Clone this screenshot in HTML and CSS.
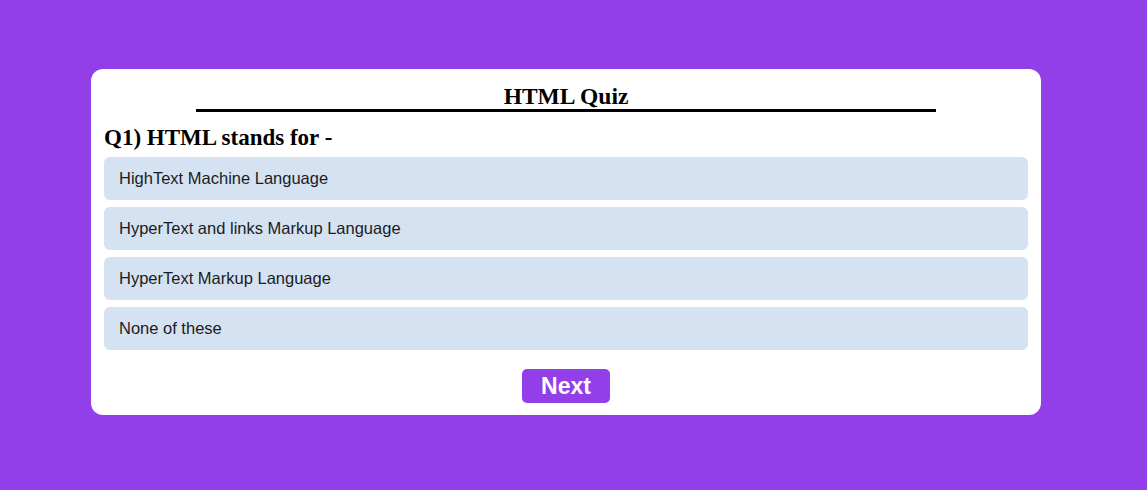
FILE: index.html
```html
<!DOCTYPE html>
<html>
<head>
<meta charset="utf-8">
<title>HTML Quiz</title>
<link rel="stylesheet" href="styles.css">
</head>
<body>
<main class="quiz">
  <h1 class="quiz-title">HTML Quiz</h1>
  <h2 class="question">Q1) HTML stands for -</h2>
  <ul class="options">
    <li class="option">HighText Machine Language</li>
    <li class="option">HyperText and links Markup Language</li>
    <li class="option">HyperText Markup Language</li>
    <li class="option">None of these</li>
  </ul>
  <div class="actions">
    <button class="next-btn">Next</button>
  </div>
</main>
</body>
</html>
```
FILE: styles.css
```css
html, body {
  margin: 0;
  padding: 0;
}
body {
  background: #923ee9;
  height: 490px;
  padding: 69px 0 0 91px;
  box-sizing: border-box;
}
.quiz {
  width: 950px;
  box-sizing: border-box;
  background: #ffffff;
  border-radius: 12px;
  padding: 14px 13px 12px;
  display: flex;
  flex-direction: column;
}
.quiz-title {
  margin: 0 auto;
  width: 80%;
  text-align: center;
  font-family: "Liberation Serif", "Times New Roman", serif;
  font-weight: bold;
  font-size: 23.5px;
  line-height: 26px;
  color: #000;
  border-bottom: 3px solid #000;
}
.question {
  margin: 13px 0 6px;
  font-family: "Liberation Serif", "Times New Roman", serif;
  font-weight: bold;
  font-size: 23px;
  line-height: 26px;
  color: #000;
}
.options {
  list-style: none;
  margin: 0;
  padding: 0;
  display: flex;
  flex-direction: column;
  gap: 7px;
}
.option {
  background: #d4e2f2;
  border-radius: 6px;
  height: 43px;
  display: flex;
  align-items: center;
  padding: 0 15px;
  font-family: "Liberation Sans", Arial, sans-serif;
  font-size: 16.5px;
  color: #1c1c1c;
}
.actions {
  display: flex;
  justify-content: center;
  margin-top: 19px;
}
.next-btn {
  background: #923ee9;
  color: #ffffff;
  border: none;
  border-radius: 5px;
  width: 88px;
  height: 34px;
  padding: 0;
  font-family: "Liberation Sans", Arial, sans-serif;
  font-weight: bold;
  font-size: 23px;
  cursor: pointer;
}
```
